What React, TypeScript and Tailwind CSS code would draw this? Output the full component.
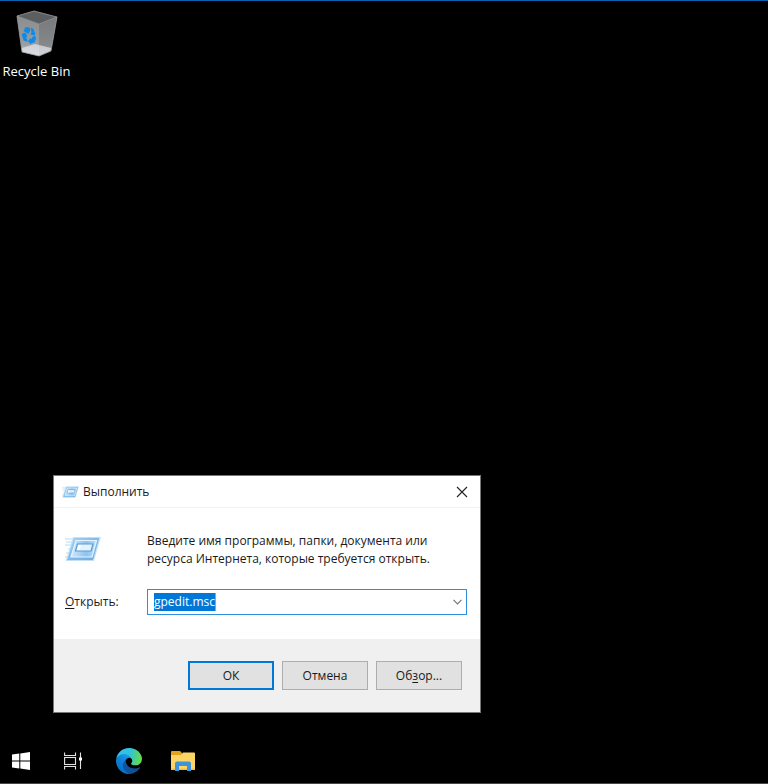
import React, { useEffect, useRef, useState } from "react";

const RecycleBinIcon: React.FC = () => (
  <svg width="42" height="47" viewBox="0 0 42 47" aria-hidden="true">
    <defs>
      <linearGradient id="binLeft" x1="0" y1="0" x2="0" y2="1">
        <stop offset="0" stopColor="#8b8e90" />
        <stop offset="0.7" stopColor="#9a9d9f" />
        <stop offset="1" stopColor="#c9ccd2" />
      </linearGradient>
      <linearGradient id="binRight" x1="0" y1="0" x2="0" y2="1">
        <stop offset="0" stopColor="#77797b" />
        <stop offset="0.7" stopColor="#858789" />
        <stop offset="1" stopColor="#a6a9ad" />
      </linearGradient>
    </defs>
    <path d="M1 6 L23 14 L23 46 L6 42 Z" fill="url(#binLeft)" />
    <path d="M23 14 L41 7 L35 41 L23 46 Z" fill="url(#binRight)" />
    <path d="M1 6 L18 1 L41 7 L23 14 Z" fill="#5c5e60" />
    <path d="M6 38 L19 34 L35 38 L34.500 41 L23 46 L6 42 Z" fill="#e3e5ec" opacity="0.7" />
    <path
      d="M1 6 L18 1 L41 7 L23 14 Z M1 6 L6 42 L23 46 L35 41 L41 7"
      fill="none"
      stroke="#9b9d9f"
      strokeWidth="0.8"
    />
    <g fill="#0f8ae6">
      <path d="M7.500 21 L9.500 17 L13.500 17.500 L14.500 20 L12.500 24 Z" />
      <path d="M15 17.500 L17.500 19 L18.500 22 L19.500 23.500 L18.500 25.500 L14.500 24.500 L15.500 22.500 Z" />
      <path d="M5.500 24 L9.500 22.500 L11.500 26.500 L10 27 L11 29 L11.500 32 L7.500 30.500 Z" />
      <path d="M16.500 27 L19 25.500 L20 28.500 L18.500 32.500 L15.500 33 L15 34.500 L12 31 L14.500 28 L15 29.500 Z" />
    </g>
  </svg>
);

const RunIcon: React.FC<{ className: string }> = ({ className }) => (
  <svg className={className} viewBox="0 0 36 26" aria-hidden="true">
    <defs>
      <linearGradient id="runFrame" x1="0" y1="0" x2="1" y2="1">
        <stop offset="0" stopColor="#a9d8f7" />
        <stop offset="0.5" stopColor="#7dbbec" />
        <stop offset="1" stopColor="#6cacdf" />
      </linearGradient>
      <linearGradient id="runPanel" x1="0" y1="0" x2="1" y2="0">
        <stop offset="0" stopColor="#cfe7fa" />
        <stop offset="0.6" stopColor="#8dc3f0" />
        <stop offset="1" stopColor="#b9dcf8" />
      </linearGradient>
    </defs>
    <path d="M0 3 H9 M1 6 H8 M0 9 H7 M3 13 H6 M1 17 H5 M0 21 H4" stroke="#b4dbf6" strokeWidth="1.200" />
    <path d="M8.500 1.500 H35 L28.500 24.500 H1.500 Z" fill="url(#runFrame)" stroke="#c3dff3" strokeWidth="1.200" />
    <path d="M11 4.500 H31.500 L27 21 H6 Z" fill="url(#runPanel)" stroke="#e6f4ff" strokeWidth="1.200" />
    <path d="M12.500 8 H28 L26 15 H10.500 Z" fill="#e4f2fd" stroke="#5a9bd2" strokeWidth="1.200" />
    <path d="M13.500 9 H16 L14.500 14 H12 Z" fill="#fff" />
  </svg>
);

const CloseIcon: React.FC = () => (
  <svg width="12" height="12" viewBox="0 0 12 12" aria-hidden="true">
    <path d="M1 1 L11 11 M11 1 L1 11" stroke="#222" strokeWidth="1.100" />
  </svg>
);

const ChevronIcon: React.FC = () => (
  <svg width="9" height="6" viewBox="0 0 9 6" aria-hidden="true">
    <path d="M0.500 0.800 L4.500 4.800 L8.500 0.800" fill="none" stroke="#777" strokeWidth="1.200" />
  </svg>
);

const WindowsIcon: React.FC = () => (
  <svg width="18" height="18" viewBox="0 0 18 18" fill="#fff" aria-hidden="true">
    <path d="M0 2.600 L7.300 1.500 V8.500 H0 Z M8.300 1.400 L18 0 V8.500 H8.300 Z M0 9.500 H7.300 V16.500 L0 15.400 Z M8.300 9.500 H18 V18 L8.300 16.600 Z" />
  </svg>
);

const TaskViewIcon: React.FC = () => (
  <svg width="18" height="18" viewBox="0 0 18 18" aria-hidden="true">
    <g fill="none" stroke="#e2e2e2" strokeWidth="1.100">
      <path d="M0.600 0.500 V3.500 H11.500 V0.500" />
      <rect x="0.600" y="5.500" width="10.900" height="7" />
      <path d="M0.600 17.500 V14.500 H11.500 V17.500" />
      <path d="M16.500 0.500 V17" />
    </g>
    <rect x="15" y="5.500" width="3" height="3" fill="#fff" />
  </svg>
);

const EdgeIcon: React.FC = () => (
  <svg width="26" height="26" viewBox="0 0 256 256" aria-hidden="true">
    <defs>
      <linearGradient id="edgeNavy" x1="60" y1="177" x2="240" y2="177" gradientUnits="userSpaceOnUse">
        <stop offset="0" stopColor="#0c59a4" />
        <stop offset="1" stopColor="#114a8b" />
      </linearGradient>
      <linearGradient id="edgeBlue" x1="150" y1="90" x2="50" y2="230" gradientUnits="userSpaceOnUse">
        <stop offset="0" stopColor="#1b9de2" />
        <stop offset="0.5" stopColor="#0f80d7" />
        <stop offset="1" stopColor="#0870c9" />
      </linearGradient>
      <linearGradient id="edgeGreen" x1="10" y1="60" x2="250" y2="110" gradientUnits="userSpaceOnUse">
        <stop offset="0" stopColor="#35c1f1" />
        <stop offset="0.5" stopColor="#2fc3dc" />
        <stop offset="0.8" stopColor="#52d17c" />
        <stop offset="1" stopColor="#66e047" />
      </linearGradient>
    </defs>
    <path
      fill="url(#edgeNavy)"
      d="M231 190.500c-3.400 1.800-6.900 3.400-10.500 4.700a101.700 101.700 0 0 1-35.900 6.500c-47.300 0-88.500-32.500-88.500-74.300a31.500 31.500 0 0 1 16.400-27.300c-42.800 1.800-53.800 46.400-53.800 72.500 0 73.900 68.100 81.400 82.800 81.400 7.900 0 19.800-2.300 27-4.600l1.300-.4a128.300 128.300 0 0 0 66.600-52.800 4 4 0 0 0-5.400-5.700z"
    />
    <path
      fill="url(#edgeBlue)"
      d="M105.700 241.400a79.200 79.200 0 0 1-22.700-21.300 80.700 80.700 0 0 1 29.500-120c3.200-1.500 8.500-4.100 15.600-4a32.400 32.400 0 0 1 25.700 13 31.900 31.900 0 0 1 6.300 18.700c0-.2 24.500-79.600-80-79.600-43.900 0-80 41.700-80 78.200a130.200 130.200 0 0 0 12.100 56 128 128 0 0 0 156.400 67 75.500 75.500 0 0 1-62.900-8z"
    />
    <path
      fill="url(#edgeGreen)"
      d="M152.300 148.900c-.8 1-3.300 2.500-3.300 5.700 0 2.600 1.700 5.100 4.700 7.200 14.400 10 41.500 8.700 41.500 8.700a59.500 59.500 0 0 0 30.300-8.300A61.400 61.400 0 0 0 255.900 109.200c.3-22.400-8-37.300-11.300-43.900C223.500 23.900 177.700 0 128 0A128 128 0 0 0 0 126.200c.5-36.500 36.800-66 80-66 3.500 0 23.500.3 42 10.100 16.300 8.600 24.900 18.900 30.800 29.200 6.200 10.700 7.300 24.100 7.300 29.500s-2.700 13.300-7.800 19.900z"
    />
  </svg>
);

const ExplorerIcon: React.FC = () => (
  <svg width="24" height="20" viewBox="0 0 24 20" aria-hidden="true">
    <path d="M0 1 Q0 0 1 0 H9 L11 2 V5 H0 Z" fill="#e5a01c" />
    <path d="M0 4 H10 L12 1.500 H23 Q24 1.500 24 2.500 V19 H0 Z" fill="#fdd566" />
    <path d="M0 17.500 H24 V19 H0 Z" fill="#f3bd45" />
    <path d="M4 20 V12.500 Q4 10.500 6 10.500 H18 Q20 10.500 20 12.500 V20 H16 V15 H8 V20 Z" fill="#3d94d9" />
  </svg>
);

const taskbarItems = [
  { label: "Start", icon: <WindowsIcon />, width: "w-[42px]" },
  { label: "Task View", icon: <TaskViewIcon />, width: "w-[62px]" },
  { label: "Microsoft Edge", icon: <EdgeIcon />, width: "w-[50px]" },
  { label: "File Explorer", icon: <ExplorerIcon />, width: "w-[58px]" },
];

const RunDialog: React.FC = () => {
  const [command, setCommand] = useState("gpedit.msc");
  const inputRef = useRef<HTMLInputElement>(null);

  // the command is preselected when the dialog opens
  useEffect(() => {
    inputRef.current?.focus();
    inputRef.current?.select();
  }, []);

  return (
    <section
      role="dialog"
      aria-labelledby="run-title"
      className="absolute bottom-[26px] left-[53px] w-[428px] border border-[#777] bg-white text-[12px] leading-[18px] text-[#1a1a1a]"
    >
      <header className="flex h-8 items-center border-b border-[#f2f2f2] pl-2 pr-3">
        <RunIcon className="h-3 w-[17px]" />
        <h1 id="run-title" className="ml-1 flex-1">
          Выполнить
        </h1>
        <button type="button" aria-label="Закрыть">
          <CloseIcon />
        </button>
      </header>
      <div className="px-[11px] pb-6 pt-6">
        <div className="flex">
          <div className="w-[82px] pt-1">
            <RunIcon className="h-[26px] w-9" />
          </div>
          <p className="flex-1">
            Введите имя программы, папки, документа или
            <br />
            ресурса Интернета, которые требуется открыть.
          </p>
        </div>
        <div className="mt-[21px] flex items-center">
          <label htmlFor="command" className="w-[82px]">
            <span className="underline underline-offset-2">О</span>ткрыть:
          </label>
          <div className="mr-[2px] flex h-[26px] flex-1 items-center border border-[#2e8fe0] pl-[6px] pr-1">
            <input
              id="command"
              ref={inputRef}
              type="text"
              value={command}
              onChange={(e) => setCommand(e.target.value)}
              className="field-sizing-content leading-[18px] outline-none selection:bg-[#0078d7] selection:text-white"
            />
            <span className="h-[18px] w-px bg-[#e8904a]" />
            <button type="button" aria-label="Показать список" className="ml-auto">
              <ChevronIcon />
            </button>
          </div>
        </div>
      </div>
      <footer className="flex justify-end gap-2 bg-[#f0f0f0] pb-[22px] pr-[18px] pt-[22px]">
        <button type="button" className="h-[29px] w-[86px] border-2 border-[#0078d7] bg-[#e1e1e1]">
          ОК
        </button>
        <button type="button" className="h-[29px] w-[86px] border border-[#adadad] bg-[#e1e1e1]">
          Отмена
        </button>
        <button type="button" className="h-[29px] w-[86px] border border-[#adadad] bg-[#e1e1e1]">
          Об<span className="underline underline-offset-2">з</span>ор...
        </button>
      </footer>
    </section>
  );
};

const App: React.FC = () => {
  return (
    <div className="flex min-h-screen flex-col border-b border-t border-b-[#4a4448] border-t-[#0a64ad] bg-black font-['Open_Sans','Noto_Sans',sans-serif]">
      <main className="relative flex-1">
        <button type="button" className="flex w-[73px] flex-col items-center pt-[9px] text-[13px] leading-[18px] text-white">
          <RecycleBinIcon />
          <span className="mt-[5px] whitespace-nowrap">Recycle Bin</span>
        </button>
        <RunDialog />
      </main>
      <nav className="flex h-11 items-center">
        {taskbarItems.map((item) => (
          <button
            key={item.label}
            type="button"
            aria-label={item.label}
            className={`flex h-full items-center justify-center ${item.width}`}
          >
            {item.icon}
          </button>
        ))}
      </nav>
    </div>
  );
};

export default App;
